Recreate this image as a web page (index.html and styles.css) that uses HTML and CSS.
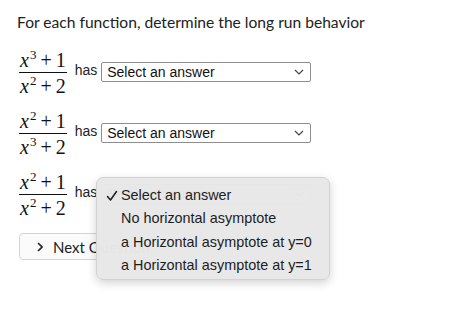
FILE: index.html
```html
<!DOCTYPE html>
<html>
<head>
<meta charset="utf-8">
<link rel="stylesheet" href="styles.css">
</head>
<body>
<div class="page">
  <p class="title">For each function, determine the long run behavior</p>
  <div class="row">
    <span class="frac"><span class="num"><i>x</i><sup>3</sup><span class="op">+</span>1</span><span class="den"><i>x</i><sup>2</sup><span class="op">+</span>2</span></span>
    <span class="has">has</span>
    <span class="select">Select an answer<svg class="chev" viewBox="0 0 10 6" width="10" height="6"><path d="M1 1 L5 5 L9 1" fill="none" stroke="#444" stroke-width="1.2"/></svg></span>
  </div>
  <div class="row">
    <span class="frac"><span class="num"><i>x</i><sup>2</sup><span class="op">+</span>1</span><span class="den"><i>x</i><sup>3</sup><span class="op">+</span>2</span></span>
    <span class="has">has</span>
    <span class="select">Select an answer<svg class="chev" viewBox="0 0 10 6" width="10" height="6"><path d="M1 1 L5 5 L9 1" fill="none" stroke="#444" stroke-width="1.2"/></svg></span>
  </div>
  <div class="row">
    <span class="frac"><span class="num"><i>x</i><sup>2</sup><span class="op">+</span>1</span><span class="den"><i>x</i><sup>2</sup><span class="op">+</span>2</span></span>
    <span class="has">has</span>
    <span class="select">Select an answer<svg class="chev" viewBox="0 0 10 6" width="10" height="6"><path d="M1 1 L5 5 L9 1" fill="none" stroke="#444" stroke-width="1.2"/></svg></span>
  </div>
  <div class="actions">
    <button class="next"><svg viewBox="0 0 6 10" width="6" height="10"><path d="M1 1 L5 5 L1 9" fill="none" stroke="#222" stroke-width="1.6"/></svg>Next Question</button>
  </div>
</div>
<div class="menu">
  <div class="item"><svg class="check" viewBox="0 0 12 12" width="12" height="12"><path d="M1.5 6.5 L4.5 10 L10.5 1.5" fill="none" stroke="#1d1d1d" stroke-width="1.5" stroke-linecap="round" stroke-linejoin="round"/></svg>Select an answer</div>
  <div class="item">No horizontal asymptote</div>
  <div class="item">a Horizontal asymptote at y=0</div>
  <div class="item">a Horizontal asymptote at y=1</div>
</div>
</body>
</html>
```
FILE: styles.css
```css
html, body {
  margin: 0;
  padding: 0;
  background: #fff;
}
body {
  font-family: Lato, "Liberation Sans", sans-serif;
  color: #222;
  width: 474px;
  height: 310px;
  overflow: hidden;
  position: relative;
}
.page {
  padding: 12px 17px 0 18px;
}
.title {
  margin: 0 0 18px -1px;
  font-size: 15.6px;
  line-height: 20px;
}
.row {
  display: flex;
  align-items: center;
  height: 44px;
  margin-bottom: 17px;
}
.frac {
  display: inline-flex;
  flex-direction: column;
  align-items: stretch;
  font-family: "Liberation Serif", "Times New Roman", serif;
  font-size: 20px;
  color: #111;
  text-align: center;
  margin-left: 1px;
}
.frac i {
  font-family: "Liberation Serif", "Times New Roman", serif;
  font-style: italic;
}
.frac sup {
  font-size: 13px;
  line-height: 0;
  vertical-align: 0;
  position: relative;
  top: -8px;
  margin-left: 1px;
}
.op {
  margin: 0 4px;
}
.num {
  line-height: 18px;
  padding: 2px 1px 3px;
  border-bottom: 1.4px solid #111;
}
.den {
  line-height: 18px;
  padding: 4px 1px 0;
}
.has {
  font-family: "Liberation Sans", Arial, sans-serif;
  font-size: 14px;
  color: #222;
  margin-left: 8px;
  margin-right: 4px;
  position: relative;
  top: -2px;
}
.select {
  display: flex;
  align-items: center;
  justify-content: space-between;
  box-sizing: border-box;
  width: 210px;
  height: 20px;
  border: 1px solid #8e8e8e;
  border-radius: 2px;
  padding: 0 6px 0 5px;
  font-family: "Liberation Sans", Arial, sans-serif;
  font-size: 14px;
  color: #111;
  background: #fff;
}
.chev {
  display: block;
}
.next {
  display: inline-flex;
  align-items: center;
  gap: 10px;
  height: 27px;
  padding: 0 14px 0 17px;
  margin-left: 1px;
  border: 1px solid #d4d4d4;
  border-radius: 4px;
  background: #fbfbfb;
  font-family: Lato, "Liberation Sans", sans-serif;
  font-size: 15px;
  color: #222;
}
.menu {
  position: absolute;
  left: 96px;
  top: 177px;
  width: 234px;
  height: 103px;
  box-sizing: border-box;
  padding-top: 6px;
  background: rgba(232, 232, 232, 0.98);
  border: 1px solid #d2d2d2;
  border-radius: 7px;
  box-shadow: 0 3px 10px rgba(0, 0, 0, 0.18);
  font-family: "Liberation Sans", Arial, sans-serif;
  font-size: 14.4px;
  color: #1d1d1d;
}
.item {
  position: relative;
  height: 23.3px;
  line-height: 23px;
  padding-left: 24px;
}
.check {
  position: absolute;
  left: 9px;
  top: 6px;
}
```
